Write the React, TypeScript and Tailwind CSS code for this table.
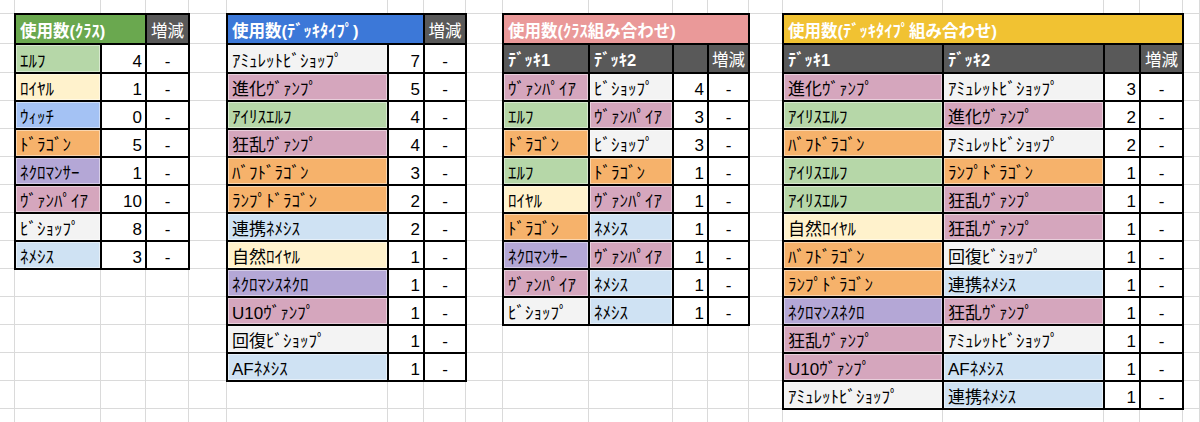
import React from 'react';

const FILL = {
  elf: 'bg-[#b6d7a8]',
  royal: 'bg-[#fff2cc]',
  witch: 'bg-[#a4c2f4]',
  dragon: 'bg-[#f6b26b]',
  necro: 'bg-[#b4a7d6]',
  vamp: 'bg-[#d5a6bd]',
  bishop: 'bg-[#f3f3f3]',
  nemesis: 'bg-[#cfe2f3]',
} as const;

type Fill = keyof typeof FILL;
type Row = [string, Fill];

const CLASSES: Record<string, Fill> = {
  'ｴﾙﾌ': 'elf',
  'ﾛｲﾔﾙ': 'royal',
  'ｳｨｯﾁ': 'witch',
  'ﾄﾞﾗｺﾞﾝ': 'dragon',
  'ﾈｸﾛﾏﾝｻｰ': 'necro',
  'ｳﾞｧﾝﾊﾟｲｱ': 'vamp',
  'ﾋﾞｼｮｯﾌﾟ': 'bishop',
  'ﾈﾒｼｽ': 'nemesis',
};

const DECKS: Record<string, Fill> = {
  'ｱﾐｭﾚｯﾄﾋﾞｼｮｯﾌﾟ': 'bishop',
  '進化ｳﾞｧﾝﾌﾟ': 'vamp',
  'ｱｲﾘｽｴﾙﾌ': 'elf',
  '狂乱ｳﾞｧﾝﾌﾟ': 'vamp',
  'ﾊﾞﾌﾄﾞﾗｺﾞﾝ': 'dragon',
  'ﾗﾝﾌﾟﾄﾞﾗｺﾞﾝ': 'dragon',
  '連携ﾈﾒｼｽ': 'nemesis',
  '自然ﾛｲﾔﾙ': 'royal',
  'ﾈｸﾛﾏﾝｽﾈｸﾛ': 'necro',
  'U10ｳﾞｧﾝﾌﾟ': 'vamp',
  '回復ﾋﾞｼｮｯﾌﾟ': 'bishop',
  'AFﾈﾒｼｽ': 'nemesis',
};

const classUse: [string, number][] = [
  ['ｴﾙﾌ', 4], ['ﾛｲﾔﾙ', 1], ['ｳｨｯﾁ', 0], ['ﾄﾞﾗｺﾞﾝ', 5],
  ['ﾈｸﾛﾏﾝｻｰ', 1], ['ｳﾞｧﾝﾊﾟｲｱ', 10], ['ﾋﾞｼｮｯﾌﾟ', 8], ['ﾈﾒｼｽ', 3],
];

const deckUse: [string, number][] = [
  ['ｱﾐｭﾚｯﾄﾋﾞｼｮｯﾌﾟ', 7], ['進化ｳﾞｧﾝﾌﾟ', 5], ['ｱｲﾘｽｴﾙﾌ', 4], ['狂乱ｳﾞｧﾝﾌﾟ', 4],
  ['ﾊﾞﾌﾄﾞﾗｺﾞﾝ', 3], ['ﾗﾝﾌﾟﾄﾞﾗｺﾞﾝ', 2], ['連携ﾈﾒｼｽ', 2], ['自然ﾛｲﾔﾙ', 1],
  ['ﾈｸﾛﾏﾝｽﾈｸﾛ', 1], ['U10ｳﾞｧﾝﾌﾟ', 1], ['回復ﾋﾞｼｮｯﾌﾟ', 1], ['AFﾈﾒｼｽ', 1],
];

const classPairs: [string, string, number][] = [
  ['ｳﾞｧﾝﾊﾟｲｱ', 'ﾋﾞｼｮｯﾌﾟ', 4], ['ｴﾙﾌ', 'ｳﾞｧﾝﾊﾟｲｱ', 3], ['ﾄﾞﾗｺﾞﾝ', 'ﾋﾞｼｮｯﾌﾟ', 3],
  ['ｴﾙﾌ', 'ﾄﾞﾗｺﾞﾝ', 1], ['ﾛｲﾔﾙ', 'ｳﾞｧﾝﾊﾟｲｱ', 1], ['ﾄﾞﾗｺﾞﾝ', 'ﾈﾒｼｽ', 1],
  ['ﾈｸﾛﾏﾝｻｰ', 'ｳﾞｧﾝﾊﾟｲｱ', 1], ['ｳﾞｧﾝﾊﾟｲｱ', 'ﾈﾒｼｽ', 1], ['ﾋﾞｼｮｯﾌﾟ', 'ﾈﾒｼｽ', 1],
];

const deckPairs: [string, string, number][] = [
  ['進化ｳﾞｧﾝﾌﾟ', 'ｱﾐｭﾚｯﾄﾋﾞｼｮｯﾌﾟ', 3], ['ｱｲﾘｽｴﾙﾌ', '進化ｳﾞｧﾝﾌﾟ', 2],
  ['ﾊﾞﾌﾄﾞﾗｺﾞﾝ', 'ｱﾐｭﾚｯﾄﾋﾞｼｮｯﾌﾟ', 2], ['ｱｲﾘｽｴﾙﾌ', 'ﾗﾝﾌﾟﾄﾞﾗｺﾞﾝ', 1],
  ['ｱｲﾘｽｴﾙﾌ', '狂乱ｳﾞｧﾝﾌﾟ', 1], ['自然ﾛｲﾔﾙ', '狂乱ｳﾞｧﾝﾌﾟ', 1],
  ['ﾊﾞﾌﾄﾞﾗｺﾞﾝ', '回復ﾋﾞｼｮｯﾌﾟ', 1], ['ﾗﾝﾌﾟﾄﾞﾗｺﾞﾝ', '連携ﾈﾒｼｽ', 1],
  ['ﾈｸﾛﾏﾝｽﾈｸﾛ', '狂乱ｳﾞｧﾝﾌﾟ', 1], ['狂乱ｳﾞｧﾝﾌﾟ', 'ｱﾐｭﾚｯﾄﾋﾞｼｮｯﾌﾟ', 1],
  ['U10ｳﾞｧﾝﾌﾟ', 'AFﾈﾒｼｽ', 1], ['ｱﾐｭﾚｯﾄﾋﾞｼｮｯﾌﾟ', '連携ﾈﾒｼｽ', 1],
];

const edge = 'border-r-2 border-b-2 border-black';

function Name({ row }: { row: Row }) {
  return (
    <div className={`${FILL[row[1]]} ${edge} flex items-center pl-1 pt-[5px] text-[17px] leading-none whitespace-nowrap overflow-hidden shadow-[inset_0_0_0_1px_rgba(255,255,255,0.45)]`}>
      {row[0]}
    </div>
  );
}

function Num({ n }: { n: number }) {
  return (
    <div className={`bg-white ${edge} flex items-center justify-end pr-[3px] pt-[5px] text-[17px] leading-none`}>{n}</div>
  );
}

function Dash() {
  return <div className={`bg-white ${edge} flex items-center justify-center pt-[5px] text-[17px] leading-none`}>-</div>;
}

function Head({ children, bold, span }: { children?: React.ReactNode; bold?: boolean; span?: string }) {
  return (
    <div className={`bg-[#595959] ${edge} ${span ?? ''} flex items-center pt-[4px] text-[16.5px] leading-none text-white whitespace-nowrap ${bold ? 'font-bold pl-1' : 'justify-center'}`}>
      {children}
    </div>
  );
}

function Title({ text, bg, span }: { text: string; bg: string; span: string }) {
  return (
    <div className={`${bg} ${edge} ${span} flex items-center pl-1 pt-[4px] text-[16.5px] font-bold leading-none text-white whitespace-nowrap`}>
      {text}
    </div>
  );
}

const table = 'self-start justify-self-start -ml-px -mt-px grid border-l-2 border-t-2 border-black bg-white';

export default function App() {
  return (
    <div className="grid h-[422px] w-[1200px] overflow-hidden bg-white text-black font-['Liberation_Sans','Noto_Sans_CJK_JP',sans-serif]">
      {/* sheet gridlines */}
      <div className="[grid-area:1/1] grid grid-cols-[15px_86px_45px_43px_38px_161px_36px_42px_37px_86px_84px_35px_41px_34px_160px_161px_36px_43px_1fr] grid-rows-[14px_30px_29px_repeat(13,28px)]">
        {Array.from({ length: 19 * 16 }).map((_, i) => (
          <div key={i} className="border-r border-b border-[#dadada]" />
        ))}
      </div>

      {/* tables */}
      <div className="[grid-area:1/1] grid grid-cols-[15px_86px_45px_43px_38px_161px_36px_42px_37px_86px_84px_35px_41px_34px_160px_161px_36px_43px_1fr] grid-rows-[14px_30px_29px_repeat(13,28px)]">
        {/* class usage */}
        <div className={`${table} [grid-column:2/5] [grid-row:2/11] grid-cols-[86px_45px_43px] grid-rows-[30px_29px_repeat(7,28px)]`}>
          <Title text="使用数(ｸﾗｽ)" bg="bg-[#6aa84f]" span="col-span-2" />
          <Head>増減</Head>
          {classUse.map(([name, n]) => (
            <React.Fragment key={name}>
              <Name row={[name, CLASSES[name]]} />
              <Num n={n} />
              <Dash />
            </React.Fragment>
          ))}
        </div>

        {/* deck type usage */}
        <div className={`${table} [grid-column:6/9] [grid-row:2/15] grid-cols-[161px_36px_42px] grid-rows-[30px_29px_repeat(11,28px)]`}>
          <Title text="使用数(ﾃﾞｯｷﾀｲﾌﾟ)" bg="bg-[#3c78d8]" span="col-span-2" />
          <Head>増減</Head>
          {deckUse.map(([name, n]) => (
            <React.Fragment key={name}>
              <Name row={[name, DECKS[name]]} />
              <Num n={n} />
              <Dash />
            </React.Fragment>
          ))}
        </div>

        {/* class combos */}
        <div className={`${table} [grid-column:10/14] [grid-row:2/13] grid-cols-[86px_84px_35px_41px] grid-rows-[30px_29px_repeat(9,28px)]`}>
          <Title text="使用数(ｸﾗｽ組み合わせ)" bg="bg-[#ea9999]" span="col-span-4" />
          <Head bold>ﾃﾞｯｷ1</Head>
          <Head bold>ﾃﾞｯｷ2</Head>
          <Head />
          <Head>増減</Head>
          {classPairs.map(([a, b, n], i) => (
            <React.Fragment key={i}>
              <Name row={[a, CLASSES[a]]} />
              <Name row={[b, CLASSES[b]]} />
              <Num n={n} />
              <Dash />
            </React.Fragment>
          ))}
        </div>

        {/* deck type combos */}
        <div className={`${table} [grid-column:15/19] [grid-row:2/16] grid-cols-[160px_161px_36px_43px] grid-rows-[30px_29px_repeat(12,28px)]`}>
          <Title text="使用数(ﾃﾞｯｷﾀｲﾌﾟ組み合わせ)" bg="bg-[#f1c232]" span="col-span-4" />
          <Head bold>ﾃﾞｯｷ1</Head>
          <Head bold>ﾃﾞｯｷ2</Head>
          <Head />
          <Head>増減</Head>
          {deckPairs.map(([a, b, n], i) => (
            <React.Fragment key={i}>
              <Name row={[a, DECKS[a]]} />
              <Name row={[b, DECKS[b]]} />
              <Num n={n} />
              <Dash />
            </React.Fragment>
          ))}
        </div>
      </div>
    </div>
  );
}
